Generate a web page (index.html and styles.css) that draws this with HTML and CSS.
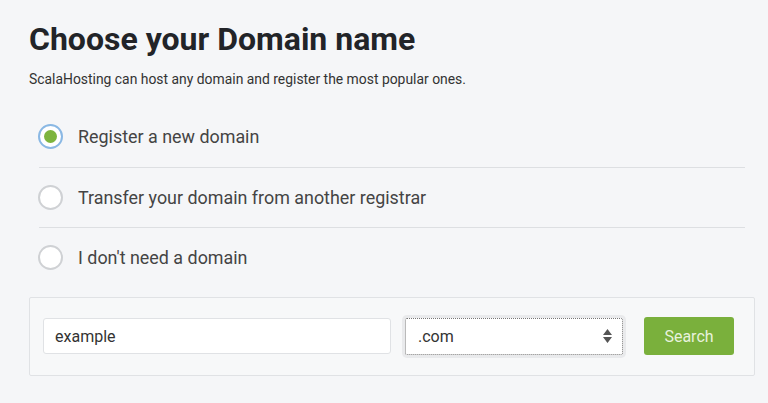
FILE: index.html
```html
<!DOCTYPE html>
<html>
<head>
<meta charset="utf-8">
<link rel="stylesheet" href="styles.css">
</head>
<body>
<main class="page">
  <h1 class="title">Choose your Domain name</h1>
  <p class="subtitle">ScalaHosting can host any domain and register the most popular ones.</p>
  <ul class="options">
    <li class="option">
      <span class="radio radio-checked"><span class="dot"></span></span>
      <span class="label">Register a new domain</span>
    </li>
    <li class="option">
      <span class="radio"></span>
      <span class="label">Transfer your domain from another registrar</span>
    </li>
    <li class="option">
      <span class="radio"></span>
      <span class="label">I don't need a domain</span>
    </li>
  </ul>
  <div class="search-box">
    <div class="input">example</div>
    <div class="select">
      <span>.com</span>
      <svg class="arrows" width="9" height="14" viewBox="0 0 9 14"><path d="M4.5 0 L9 6 L0 6 Z M0 8 L9 8 L4.5 14 Z" fill="#555"/></svg>
    </div>
    <button class="btn">Search</button>
  </div>
</main>
</body>
</html>
```
FILE: styles.css
```css
html, body {
  margin: 0;
  padding: 0;
  background: #f5f6f8;
  font-family: Roboto, "Liberation Sans", sans-serif;
}
.page {
  padding: 20px 13px 0 29px;
  width: 726px;
}
.title {
  margin: 0;
  font-size: 32px;
  line-height: 38px;
  font-weight: 700;
  color: #222428;
}
.subtitle {
  margin: 12px 0 0;
  font-size: 13.9px;
  line-height: 18px;
  color: #333;
}
.options {
  list-style: none;
  margin: 17px 0 0 10px;
  padding: 0;
  width: 706px;
}
.option {
  display: flex;
  align-items: center;
  height: 59px;
  border-bottom: 1px solid #dddfe2;
}
.option:first-child {
  height: 62px;
}
.option:last-child {
  border-bottom: none;
}
.radio {
  width: 21px;
  height: 21px;
  border: 2px solid #cfd1d4;
  border-radius: 50%;
  background: #fff;
  display: flex;
  align-items: center;
  justify-content: center;
  flex: none;
  box-sizing: content-box;
  margin-left: -1px;
}
.radio-checked {
  border-color: #8ab8e4;
}
.dot {
  width: 13px;
  height: 13px;
  border-radius: 50%;
  background: #7db43e;
}
.label {
  margin-left: 15px;
  font-size: 17.9px;
  color: #444;
}
.search-box {
  margin-top: 10px;
  border: 1px solid #e0e2e5;
  border-radius: 2px;
  background: #f7f8f9;
  display: flex;
  align-items: center;
  padding: 19px 20px 20px 13px;
  height: 38px;
}
.input {
  height: 36px;
  background: #fff;
  border: 1px solid #e0e2e5;
  border-radius: 3px;
  display: flex;
  align-items: center;
  padding-left: 11px;
  box-sizing: border-box;
  width: 348px;
  font-size: 16px;
  color: #333;
}
.select {
  margin-left: 14px;
  width: 218px;
  height: 37px;
  box-sizing: border-box;
  background: #fff;
  border: 1px dotted #777;
  border-radius: 2px;
  box-shadow: 0 0 0 3px #e9eaec;
  display: flex;
  align-items: center;
  justify-content: space-between;
  padding: 0 10px 0 12px;
  font-size: 16px;
  color: #333;
}
.arrows {
  display: block;
}
.btn {
  margin-left: 21px;
  width: 90px;
  height: 38px;
  background: #7ab03c;
  border: none;
  border-radius: 3px;
  color: #e8f2dc;
  font-family: Roboto, "Liberation Sans", sans-serif;
  font-size: 16px;
  padding: 0;
}
```
